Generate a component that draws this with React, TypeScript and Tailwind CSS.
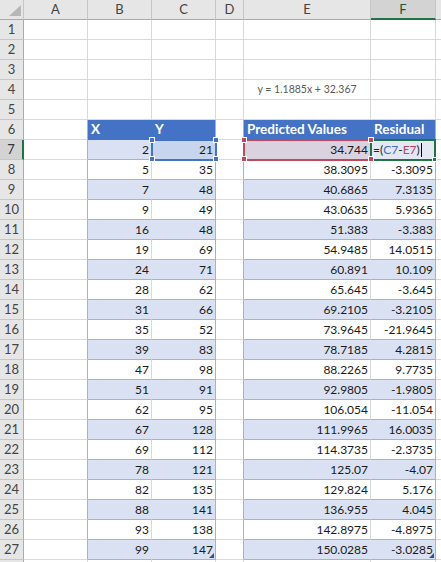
import React from "react";

// x, y, predicted, residual for rows 7..27
const data: [string, string, string, string][] = [
  ["2", "21", "34.744", ""],
  ["5", "35", "38.3095", "-3.3095"],
  ["7", "48", "40.6865", "7.3135"],
  ["9", "49", "43.0635", "5.9365"],
  ["16", "48", "51.383", "-3.383"],
  ["19", "69", "54.9485", "14.0515"],
  ["24", "71", "60.891", "10.109"],
  ["28", "62", "65.645", "-3.645"],
  ["31", "66", "69.2105", "-3.2105"],
  ["35", "52", "73.9645", "-21.9645"],
  ["39", "83", "78.7185", "4.2815"],
  ["47", "98", "88.2265", "9.7735"],
  ["51", "91", "92.9805", "-1.9805"],
  ["62", "95", "106.054", "-11.054"],
  ["67", "128", "111.9965", "16.0035"],
  ["69", "112", "114.3735", "-2.3735"],
  ["78", "121", "125.07", "-4.07"],
  ["82", "135", "129.824", "5.176"],
  ["88", "141", "136.955", "4.045"],
  ["93", "138", "142.8975", "-4.8975"],
  ["99", "147", "150.0285", "-3.0285"],
];

// G sits mostly off-screen, so its letter is left out
const LETTERS = ["A", "B", "C", "D", "E", "F", ""];
const GRID_COLS = "grid grid-cols-[24px_64px_64px_64px_28px_127px_65px_64px]";

const isTableCol = (c: number) => c === 2 || c === 3 || c === 5 || c === 6;
const inTable = (r: number, c: number) => r >= 6 && r <= 27 && isTableCol(c);
const banded = (r: number) => r >= 7 && r <= 27 && r % 2 === 1;

function rightBorder(r: number, c: number) {
  if (r >= 6 && r <= 27) {
    if (c === 1 || c === 3 || c === 4 || c === 6) return "border-r-[#9db3de]";
    if (c === 2 || c === 5) {
      if (r === 6) return "border-r-[#4472c4]";
      if (banded(r)) return "border-r-[#d9e1f2]";
    }
  }
  return "border-r-[#d9d9d9]";
}

function bottomBorder(r: number, c: number) {
  if (inTable(r, c)) return r === 6 ? "border-b-[#4472c4]" : "border-b-[#9db3de]";
  return "border-b-[#d9d9d9]";
}

function fill(r: number, c: number) {
  if (r === 7 && c === 3) return "bg-[#c8d5ee]";
  if (r === 7 && c === 5) return "bg-[#dad2de]";
  if (r === 7 && c === 6) return "bg-[#e4e8f2]";
  if (!inTable(r, c)) return "bg-white";
  if (r === 6) return "bg-[#4472c4] text-white font-bold text-[13.5px]";
  if (banded(r)) return "bg-[#d9e1f2]";
  return "bg-white";
}

function Handle({ className }: { className: string }) {
  return <span className={`absolute w-[6px] h-[6px] border border-white z-20 ${className}`} />;
}

function TableCorner() {
  return (
    <svg className="absolute right-[1px] bottom-[1px] z-10" width="5" height="5" viewBox="0 0 5 5">
      <path d="M5 0 L5 5 L0 5 Z" fill="#2f528f" />
    </svg>
  );
}

function Formula() {
  return (
    <div className="absolute left-[2px] top-0 h-full flex items-center text-[#222] whitespace-nowrap z-20">
      <span>=(</span>
      <span className="text-[#3f6fc2]">C7</span>
      <span>-</span>
      <span className="text-[#b8475c]">E7</span>
      <span>)</span>
      <span className="ml-[1px] w-[1px] h-[14px] bg-black" />
    </div>
  );
}

function Cell({ r, c }: { r: number; c: number }) {
  const row = r >= 7 && r <= 27 ? data[r - 7] : null;
  let content: React.ReactNode = null;
  let align = "justify-end pr-[2px]";

  if (r === 4 && c === 5) {
    content = <span className="text-[10.5px] text-[#595959]">y = 1.1885x + 32.367</span>;
    align = "justify-center";
  } else if (r === 6 && isTableCol(c)) {
    content = { 2: "X", 3: "Y", 5: "Predicted Values", 6: "Residual" }[c];
    align = "justify-start pl-[3px]";
  } else if (row) {
    if (c === 2) content = row[0];
    if (c === 3) content = row[1];
    if (c === 5) content = row[2];
    if (c === 6 && r !== 7) content = row[3];
  }

  return (
    <div
      className={`relative flex items-center border-r border-b ${rightBorder(r, c)} ${bottomBorder(r, c)} ${fill(r, c)} ${align}`}
    >
      {content}

      {r === 7 && c === 3 && (
        <>
          <span className="absolute -left-[1px] -top-[1px] w-[66px] h-[22px] border-2 border-[#4472c4] z-10" />
          <Handle className="bg-[#4472c4] -left-[3px] -top-[3px]" />
          <Handle className="bg-[#4472c4] left-[61px] -top-[3px]" />
          <Handle className="bg-[#4472c4] -left-[3px] top-[16px]" />
          <Handle className="bg-[#4472c4] left-[61px] top-[16px]" />
        </>
      )}

      {r === 7 && c === 5 && (
        <>
          <span className="absolute -left-[1px] -top-[1px] w-[129px] h-[22px] border-2 border-[#c0485c] z-10" />
          <Handle className="bg-[#c0485c] -left-[3px] -top-[3px]" />
          <Handle className="bg-[#c0485c] left-[124px] -top-[3px]" />
          <Handle className="bg-[#c0485c] -left-[3px] top-[16px]" />
          <Handle className="bg-[#c0485c] left-[124px] top-[16px]" />
        </>
      )}

      {r === 7 && c === 6 && (
        <>
          <span className="absolute -left-[1px] -top-[1px] w-[66px] h-[22px] border-2 border-[#217346] z-10" />
          <span className="absolute left-[61px] top-[17px] w-[5px] h-[5px] bg-[#217346] border border-white z-20" />
          <Formula />
        </>
      )}

      {r === 27 && (c === 3 || c === 6) && <TableCorner />}
    </div>
  );
}

export default function App() {
  const rows = Array.from({ length: 28 }, (_, i) => i + 1);

  return (
    <div className="w-[441px] h-[562px] overflow-hidden bg-white font-[Lato,'Liberation_Sans',sans-serif] text-[12px] text-[#1a1a1a] leading-none">
      {/* column headers */}
      <div className={`${GRID_COLS} h-5`}>
        <div className="relative bg-[#e6e6e6] border-r border-b border-r-[#c6c6c6] border-b-[#ababab]">
          <svg className="absolute left-0 top-0" width="24" height="20" viewBox="0 0 24 20">
            <path d="M9 16 L21 16 L21 5 Z" fill="#b7b7b7" />
          </svg>
        </div>
        {LETTERS.map((l, i) =>
          l === "F" ? (
            <div
              key={i}
              className="flex items-center justify-center bg-[#d3d3d3] text-[#1d5a39] text-[13px] border-r border-r-[#c6c6c6] border-b-2 border-b-[#217346]"
            >
              {l}
            </div>
          ) : (
            <div
              key={i}
              className="flex items-center justify-center bg-[#e6e6e6] text-[#444] text-[13px] border-r border-b border-r-[#c6c6c6] border-b-[#ababab]"
            >
              {l}
            </div>
          )
        )}
      </div>

      {rows.map((r) => (
        <div key={r} className={`${GRID_COLS} h-5`}>
          {r === 7 ? (
            <div className="flex items-center justify-center bg-[#d3d3d3] text-[#333] text-[13px] border-b border-b-[#c6c6c6] border-r-2 border-r-[#217346]">
              {r}
            </div>
          ) : (
            <div className="flex items-center justify-center bg-[#e6e6e6] text-[#444] text-[13px] border-b border-r border-b-[#c6c6c6] border-r-[#ababab]">
              {r <= 27 ? r : null}
            </div>
          )}
          {[1, 2, 3, 4, 5, 6, 7].map((c) => (
            <Cell key={c} r={r} c={c} />
          ))}
        </div>
      ))}
    </div>
  );
}
